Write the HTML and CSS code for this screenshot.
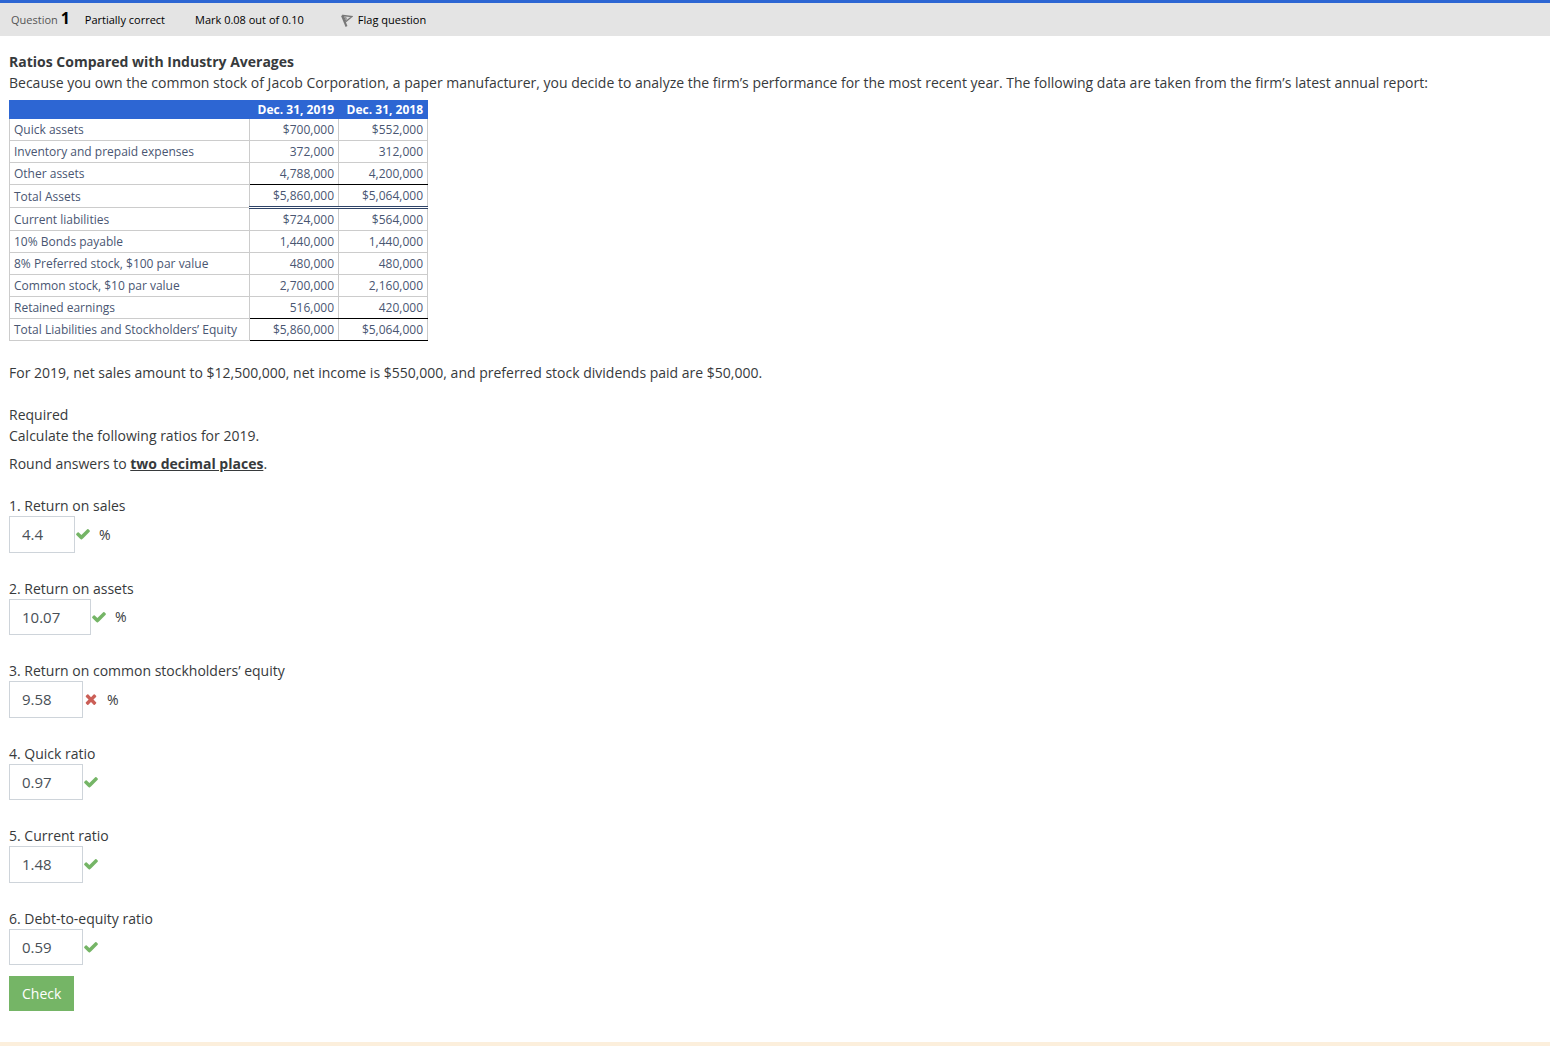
FILE: index.html
```html
<!DOCTYPE html>
<html lang="en">

<head>
    <meta charset="UTF-8">
    <meta name="viewport" content="width=device-width, initial-scale=1.0">
    <title>Question 1</title>
    <link rel="stylesheet" href="styles.css">
</head>

<body>
    <!-- icons shared by the answers -->
    <svg class="sprite" aria-hidden="true">
        <symbol id="tick" viewBox="0 0 1792 1792">
            <path d="M1671 566q0 40-28 68l-724 724-136 136q-28 28-68 28t-68-28l-136-136-362-362q-28-28-28-68t28-68l136-136q28-28 68-28t68 28l294 295 656-657q28-28 68-28t68 28l136 136q28 28 28 68z" />
        </symbol>
        <symbol id="cross" viewBox="0 0 1792 1792">
            <path d="M1490 1322q0 40-28 68l-136 136q-28 28-68 28t-68-28l-294-294-294 294q-28 28-68 28t-68-28l-136-136q-28-28-28-68t28-68l294-294-294-294q-28-28-28-68t28-68l136-136q28-28 68-28t68 28l294 294 294-294q28-28 68-28t68 28l136 136q28 28 28 68t-28 68l-294 294 294 294q28 28 28 68z" />
        </symbol>
    </svg>

    <header class="info">
        <h3 class="number">Question <span class="qno">1</span></h3>
        <div class="state">Partially correct</div>
        <div class="grade">Mark 0.08 out of 0.10</div>
        <a href="#" class="flag">
            <svg class="flag-icon" viewBox="0 0 12 13" aria-hidden="true">
                <path d="M1 1.5L5.5 12.5" fill="none" stroke="#777" stroke-width="2" />
                <path d="M2 1.5L11 2.5L5 7.5Z" fill="#ddd" stroke="#777" stroke-width="1.3" />
                <path d="M3 2L5 7L6 5L5 2.5Z" fill="#999" />
            </svg>
            <span>Flag question</span>
        </a>
    </header>

    <form class="question">
        <h4 class="title">Ratios Compared with Industry Averages</h4>
        <p class="intro">Because you own the common stock of Jacob Corporation, a paper manufacturer, you decide to analyze the firm’s performance for the most recent year. The following data are taken from the firm’s latest annual report:</p>

        <table class="report">
            <thead>
                <tr>
                    <th class="account"></th>
                    <th class="year">Dec. 31, 2019</th>
                    <th class="year">Dec. 31, 2018</th>
                </tr>
            </thead>
            <tbody>
                <tr>
                    <td>Quick assets</td>
                    <td>$700,000</td>
                    <td>$552,000</td>
                </tr>
                <tr>
                    <td>Inventory and prepaid expenses</td>
                    <td>372,000</td>
                    <td>312,000</td>
                </tr>
                <tr class="subtotal">
                    <td>Other assets</td>
                    <td>4,788,000</td>
                    <td>4,200,000</td>
                </tr>
                <tr class="total">
                    <td>Total Assets</td>
                    <td>$5,860,000</td>
                    <td>$5,064,000</td>
                </tr>
                <tr>
                    <td>Current liabilities</td>
                    <td>$724,000</td>
                    <td>$564,000</td>
                </tr>
                <tr>
                    <td>10% Bonds payable</td>
                    <td>1,440,000</td>
                    <td>1,440,000</td>
                </tr>
                <tr>
                    <td>8% Preferred stock, $100 par value</td>
                    <td>480,000</td>
                    <td>480,000</td>
                </tr>
                <tr>
                    <td>Common stock, $10 par value</td>
                    <td>2,700,000</td>
                    <td>2,160,000</td>
                </tr>
                <tr class="subtotal">
                    <td>Retained earnings</td>
                    <td>516,000</td>
                    <td>420,000</td>
                </tr>
                <tr class="subtotal">
                    <td>Total Liabilities and Stockholders’ Equity</td>
                    <td>$5,860,000</td>
                    <td>$5,064,000</td>
                </tr>
            </tbody>
        </table>

        <p class="sales">For 2019, net sales amount to $12,500,000, net income is $550,000, and preferred stock dividends paid are $50,000.</p>
        <p class="required">Required<br>Calculate the following ratios for 2019.</p>
        <p class="rounding">Round answers to <strong>two decimal places</strong>.</p>

        <div class="part">
            <label for="q1">1. Return on sales</label>
            <div class="answer">
                <input type="text" id="q1" class="short" value="4.4">
                <svg class="mark correct" role="img" aria-label="Correct"><use href="#tick" /></svg>
                <span class="unit">%</span>
            </div>
        </div>
        <div class="part">
            <label for="q2">2. Return on assets</label>
            <div class="answer">
                <input type="text" id="q2" class="long" value="10.07">
                <svg class="mark correct" role="img" aria-label="Correct"><use href="#tick" /></svg>
                <span class="unit">%</span>
            </div>
        </div>
        <div class="part">
            <label for="q3">3. Return on common stockholders’ equity</label>
            <div class="answer">
                <input type="text" id="q3" value="9.58">
                <svg class="mark incorrect" role="img" aria-label="Incorrect"><use href="#cross" /></svg>
                <span class="unit">%</span>
            </div>
        </div>
        <div class="part">
            <label for="q4">4. Quick ratio</label>
            <div class="answer">
                <input type="text" id="q4" value="0.97">
                <svg class="mark correct" role="img" aria-label="Correct"><use href="#tick" /></svg>
            </div>
        </div>
        <div class="part">
            <label for="q5">5. Current ratio</label>
            <div class="answer">
                <input type="text" id="q5" value="1.48">
                <svg class="mark correct" role="img" aria-label="Correct"><use href="#tick" /></svg>
            </div>
        </div>
        <div class="part">
            <label for="q6">6. Debt-to-equity ratio</label>
            <div class="answer">
                <input type="text" id="q6" value="0.59">
                <svg class="mark correct" role="img" aria-label="Correct"><use href="#tick" /></svg>
            </div>
        </div>

        <button type="button" class="check">Check</button>
    </form>

    <div class="outcome"></div>
</body>

</html>
```
FILE: styles.css
```css
* {
    box-sizing: border-box;
}

body {
    margin: 0;
    background-color: white;
    color: #373a3c;
    font-family: "Open Sans", sans-serif;
    font-size: 14px;
    line-height: 1.5;
}

h3,
h4,
p {
    margin: 0;
}

.sprite {
    display: none;
}

.info {
    display: flex;
    align-items: baseline;
    height: 36px;
    padding: 3px 11px 0;
    border-top: 3px solid #2d66d3;
    background-color: #e4e4e4;
    color: black;
    font-size: 11px;
}

.number {
    margin-right: 15px;
    color: #555;
    font-size: 11px;
    font-weight: normal;
}

.qno {
    color: black;
    font-size: 16px;
    font-weight: bold;
}

.state {
    margin-right: 30px;
}

.grade {
    margin-right: 37px;
}

.flag {
    display: flex;
    align-items: baseline;
    gap: 5px;
    color: black;
    text-decoration: none;
}

.flag-icon {
    align-self: center;
    width: 12px;
    height: 13px;
}

.question {
    padding: 15px 9px 0;
}

.title {
    font-size: 14px;
    font-weight: bold;
}

.report {
    margin-top: 7px;
    border-collapse: collapse;
    color: #495672;
    font-size: 12px;
    line-height: 17px;
}

.report th {
    padding: 0 4px;
    border: 1px solid #2d66d3;
    background-color: #2d66d3;
    color: white;
    text-align: right;
}

.report td {
    padding: 2px 4px;
    border: 1px solid #ccc;
    text-align: right;
}

.report td:first-child {
    text-align: left;
}

.report .account {
    width: 240px;
}

.report .year {
    width: 89px;
}

.subtotal td + td {
    border-bottom-color: black;
}

.total td + td {
    border-bottom: 3px double #2f4468;
}

.sales,
.required {
    margin-top: 21px;
}

.rounding {
    margin: 7px 0 21px;
}

.rounding strong {
    text-decoration: underline;
}

.part {
    margin-bottom: 25px;
}

.part label {
    display: block;
}

.answer {
    display: flex;
    align-items: center;
}

.answer input {
    width: 74px;
    padding: 6px 12px;
    border: 1px solid #ced4da;
    background-color: white;
    color: #495057;
    font-family: inherit;
    font-size: 15px;
    line-height: 1.5;
}

.answer .short {
    width: 66px;
}

.answer .long {
    width: 82px;
}

.mark {
    width: 16px;
    height: 16px;
}

.correct {
    fill: #75b566;
}

.incorrect {
    fill: #cb5f57;
}

.unit {
    margin-left: 8px;
}

.check {
    display: block;
    margin-top: -14px;
    padding: 6px 12px;
    border: 1px solid #75b566;
    background-color: #75b566;
    color: white;
    font-family: inherit;
    font-size: 14px;
    line-height: 1.5;
}

.outcome {
    height: 4px;
    margin-top: 31px;
    background-color: #fcefdc;
}
```
